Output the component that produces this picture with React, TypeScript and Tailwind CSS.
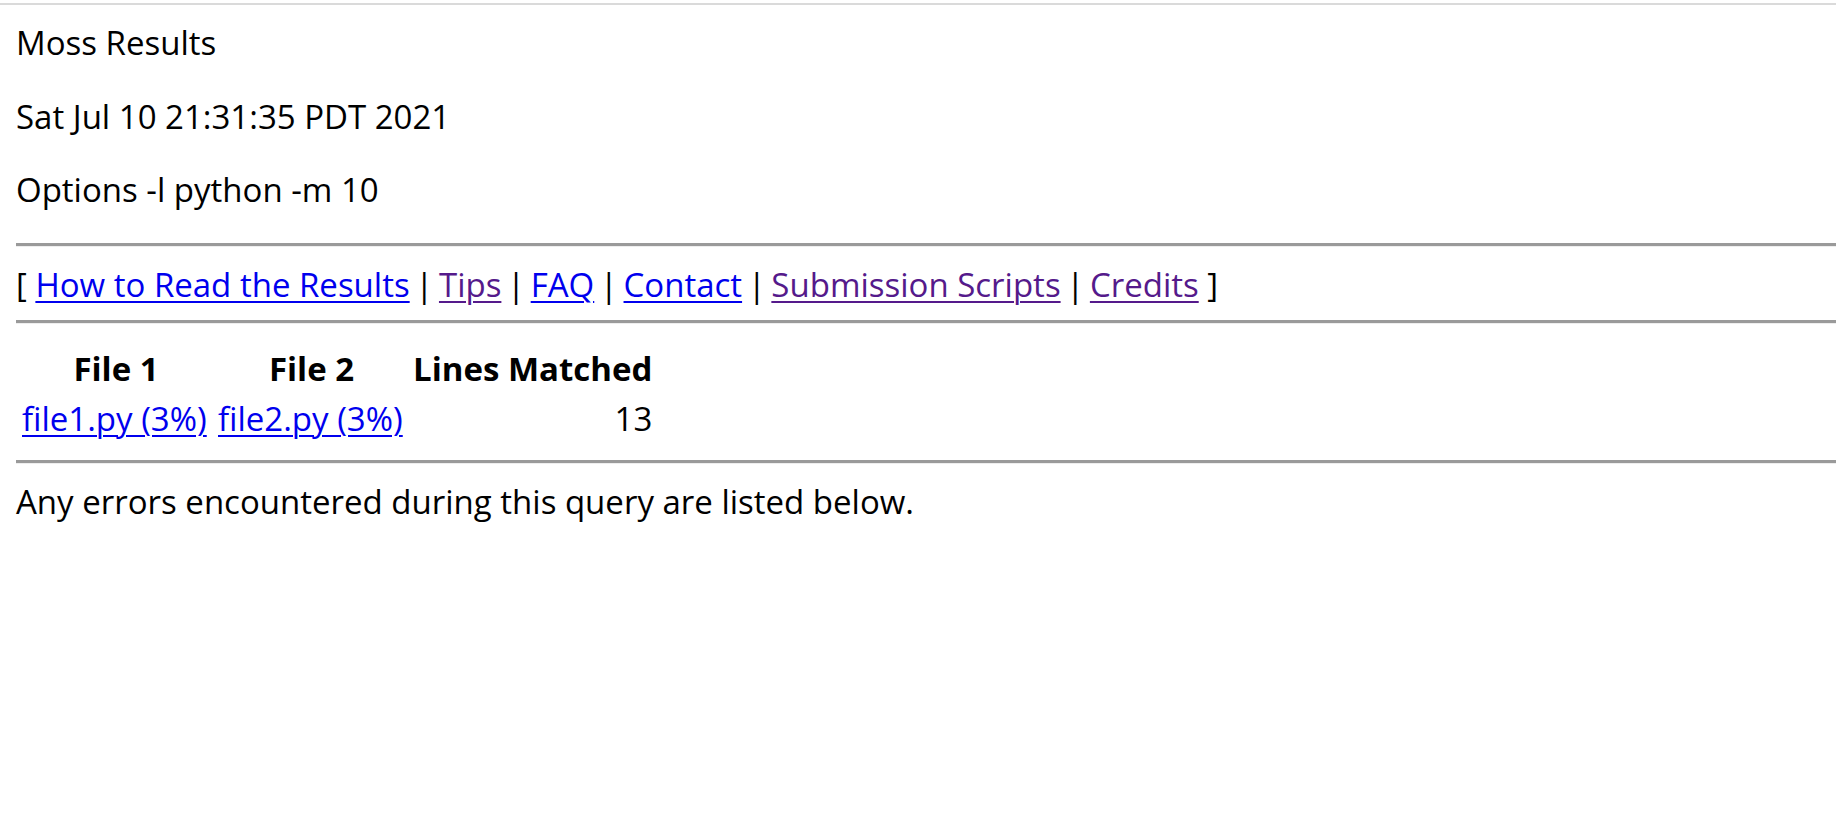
import React from "react";

type Link = { label: string; visited?: boolean };

const NAV: Link[] = [
  { label: "How to Read the Results" },
  { label: "Tips", visited: true },
  { label: "FAQ" },
  { label: "Contact" },
  { label: "Submission Scripts", visited: true },
  { label: "Credits", visited: true },
];

const ROWS = [{ file1: "file1.py (3%)", file2: "file2.py (3%)", lines: 13 }];

function Rule() {
  return <div className="h-[4px] border-t-[3px] border-b border-t-[#9a9a9a] border-b-[#eeeeee]" />;
}

function A({ children, visited }: { children: React.ReactNode; visited?: boolean }) {
  return (
    <a
      href="#"
      className={`underline decoration-2 underline-offset-[4px] ${visited ? "text-[#551a8b]" : "text-[#0000ee]"}`}
    >
      {children}
    </a>
  );
}

export default function App() {
  return (
    <div className="min-h-screen bg-white text-black text-[33px] leading-[42px] font-['Open_Sans',sans-serif]">
      <div className="h-[3px]" />
      <div className="h-[2px] bg-[#dadada]" />

      <div className="pl-4 pt-[17px]">
        <div>Moss Results</div>
        <div className="mt-[32px]">Sat Jul 10 21:31:35 PDT 2021</div>
        <div className="mt-[31px]">Options -l python -m 10</div>

        <div className="mt-[32px]">
          <Rule />
        </div>

        <div className="mt-[17px] whitespace-nowrap">
          [{" "}
          {NAV.map((l, i) => (
            <React.Fragment key={l.label}>
              <A visited={l.visited}>{l.label}</A>
              {i < NAV.length - 1 ? <span className="[word-spacing:-3px]"> | </span> : " "}
            </React.Fragment>
          ))}
          ]
        </div>

        <div className="mt-[14px]">
          <Rule />
        </div>

        <table className="mt-[18px] border-separate border-spacing-[4px]">
          <thead>
            <tr>
              <th className="w-[192px] p-[2px] font-bold whitespace-nowrap">File 1</th>
              <th className="w-[191px] p-[2px] font-bold whitespace-nowrap">File 2</th>
              <th className="p-[2px] font-bold whitespace-nowrap">Lines Matched</th>
            </tr>
          </thead>
          <tbody>
            {ROWS.map((r) => (
              <tr key={r.file1}>
                <td className="p-[2px] text-left whitespace-nowrap">
                  <A>{r.file1}</A>
                </td>
                <td className="p-[2px] text-left whitespace-nowrap">
                  <A>{r.file2}</A>
                </td>
                <td className="p-[2px] text-right">{r.lines}</td>
              </tr>
            ))}
          </tbody>
        </table>

        <div className="mt-[14px]">
          <Rule />
        </div>

        <div className="mt-[17px]">Any errors encountered during this query are listed below.</div>
      </div>
    </div>
  );
}
